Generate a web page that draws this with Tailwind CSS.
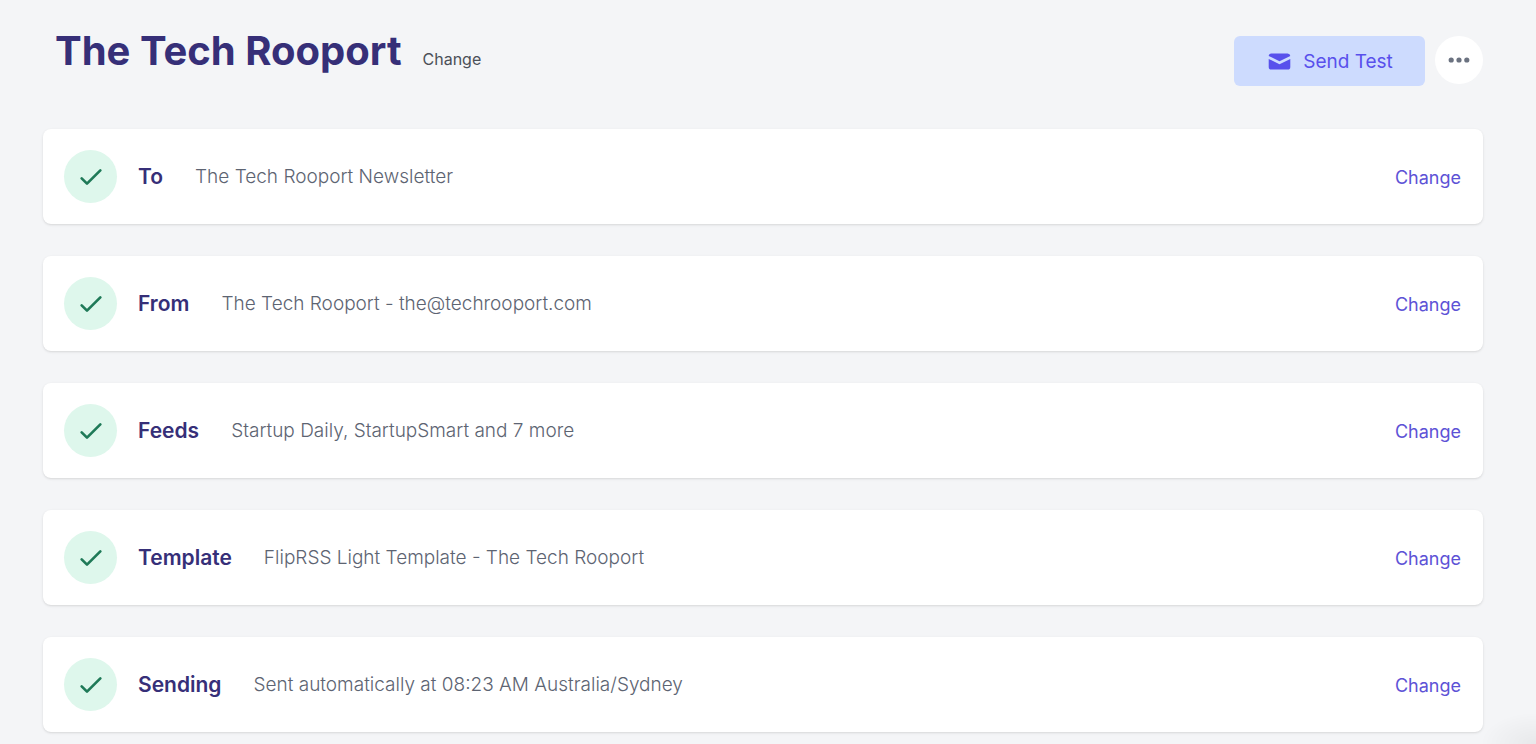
<!DOCTYPE html>
<html lang="en">
<head>
  <meta charset="UTF-8" />
  <meta name="viewport" content="width=device-width, initial-scale=1.0"/>
  <title>The Tech Rooport</title>
  <script src="https://cdn.jsdelivr.net/npm/@tailwindcss/browser@4"></script>
</head>
<body class="min-h-screen bg-[#f4f5f7] font-['Inter',sans-serif]">

  <main class="pl-[43px] pr-[53px] pt-7 pb-3">
    <header class="flex items-start justify-between pl-3">
      <div class="flex items-baseline gap-[21px]">
        <h1 class="text-[40px] leading-[46px] font-bold text-[#362f78]">The Tech Rooport</h1>
        <button type="button" class="text-base text-[#4b5058]">Change</button>
      </div>
      <div class="flex items-start gap-[10px] pt-2">
        <button type="button" class="flex h-[50px] w-[191px] items-center justify-center gap-[10px] rounded-md bg-[#cddbfe] text-[19px] text-[#5850ec]">
          <svg class="size-[27px]" viewBox="0 0 20 20" fill="currentColor" aria-hidden="true">
            <path d="M2.003 5.884L10 9.882l7.997-3.998A2 2 0 0016 4H4a2 2 0 00-1.997 1.884z"/>
            <path d="M18 8.118l-8 4-8-4V14a2 2 0 002 2h12a2 2 0 002-2V8.118z"/>
          </svg>
          <span class="pt-0.5">Send Test</span>
        </button>
        <button type="button" aria-label="More options" class="flex size-12 items-center justify-center rounded-full bg-white text-[#6b7280]">
          <svg class="size-[26px]" viewBox="0 0 20 20" fill="currentColor" aria-hidden="true">
            <path d="M6 10a2 2 0 11-4 0 2 2 0 014 0zM12 10a2 2 0 11-4 0 2 2 0 014 0zM16 12a2 2 0 100-4 2 2 0 000 4z"/>
          </svg>
        </button>
      </div>
    </header>

    <!-- Campaign steps -->
    <div id="steps" class="mt-[43px] flex flex-col gap-8"></div>
  </main>

  <div class="pointer-events-none fixed right-0 bottom-0 h-8 w-14 bg-radial-[at_100%_100%] from-black/5 to-transparent to-70%"></div>

  <template id="step">
    <section class="flex h-[95px] items-center rounded-lg bg-white pr-[22px] pl-[21px] shadow">
      <span class="flex size-[53px] items-center justify-center rounded-full bg-[#def7ec] text-[#1f7a58]">
        <svg class="size-8" viewBox="0 0 24 24" fill="none" stroke="currentColor" stroke-width="2" stroke-linecap="round" stroke-linejoin="round" aria-hidden="true">
          <path d="M5 13l4 4L19 7"/>
        </svg>
      </span>
      <div class="ml-[21px] flex items-center gap-8">
        <h2 class="text-[21px] font-semibold text-[#362f78]"></h2>
        <p class="pt-px text-[19px] font-light text-[#5d6472]"></p>
      </div>
      <button type="button" class="ml-auto pt-px text-[18px] text-[#5d52d6]">Change</button>
    </section>
  </template>

  <script>
    const steps = [
      ["To", "The Tech Rooport Newsletter"],
      ["From", "The Tech Rooport - the@techrooport.com"],
      ["Feeds", "Startup Daily, StartupSmart and 7 more"],
      ["Template", "FlipRSS Light Template - The Tech Rooport"],
      ["Sending", "Sent automatically at 08:23 AM Australia/Sydney"],
    ];

    steps.forEach(([title, detail]) => {
      const row = document.getElementById("step").content.cloneNode(true);
      row.querySelector("h2").innerText = title;
      row.querySelector("p").innerText = detail;
      document.getElementById("steps").appendChild(row);
    });
  </script>

</body>
</html>
